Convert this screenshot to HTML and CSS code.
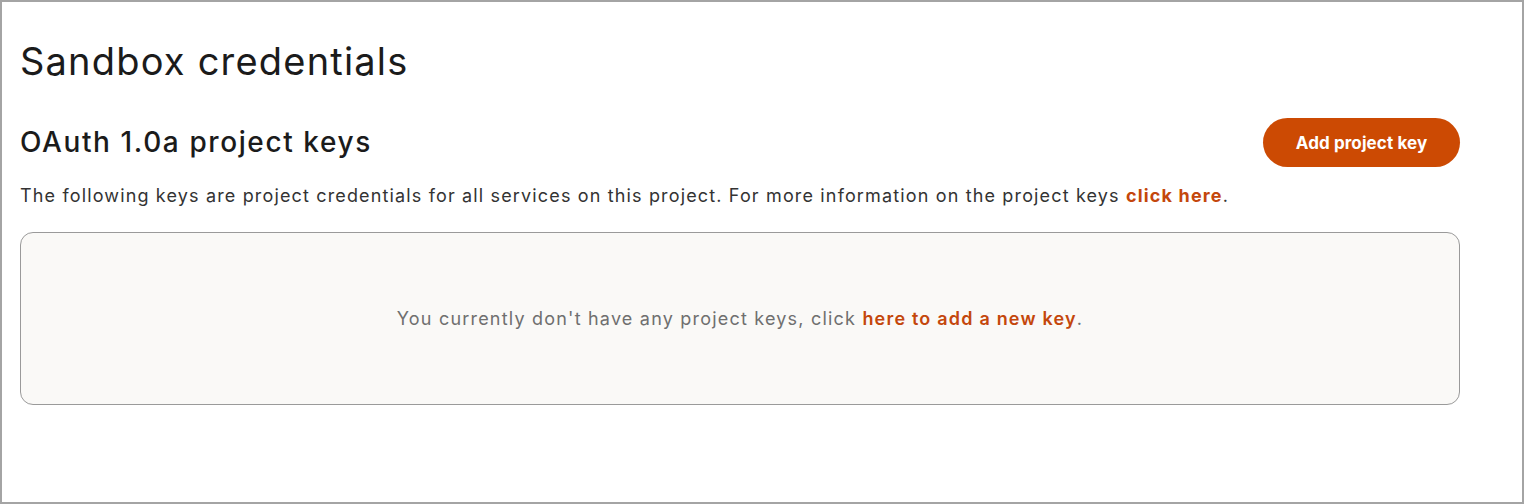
FILE: index.html
```html
<!DOCTYPE html>
<html lang="en">
<head>
<meta charset="utf-8">
<title>Sandbox credentials</title>
<link rel="stylesheet" href="styles.css">
</head>
<body>
<div class="frame">
  <main class="content">
    <h1 class="page-title">Sandbox credentials</h1>
    <div class="section-head">
      <h2 class="section-title">OAuth 1.0a project keys</h2>
      <button class="btn-primary" type="button">Add project key</button>
    </div>
    <p class="intro">The following keys are project credentials for all services on this project. For more information on the project keys <a class="link strong" href="#">click here</a>.</p>
    <div class="empty-box">
      <p class="empty-text">You currently don't have any project keys, click <a class="link" href="#">here to add a new key</a>.</p>
    </div>
  </main>
</div>
</body>
</html>
```
FILE: styles.css
```css
* { box-sizing: border-box; }
html, body { margin: 0; padding: 0; background: #fff; }
body { font-family: Inter, "Noto Sans", sans-serif; color: #1d1d1d; }
.frame {
  width: 1524px;
  height: 504px;
  border: 2px solid #a4a4a4;
  background: #fff;
  padding: 36px 62px 0 18px;
}
.content { width: 1440px; }
.page-title {
  margin: 0;
  font-size: 38px;
  font-weight: 400;
  line-height: 46px;
  color: #1b1b1b;
  letter-spacing: 1.2px;
}
.section-head {
  display: flex;
  align-items: center;
  justify-content: space-between;
  margin-top: 34px;
}
.section-title {
  margin: -2px 0 0;
  font-size: 28px;
  font-weight: 500;
  line-height: 34px;
  color: #1b1b1b;
  letter-spacing: 1.6px;
}
.btn-primary {
  width: 197px;
  height: 49px;
  border: none;
  border-radius: 25px;
  background: #cc4a03;
  color: #fff;
  font-family: inherit;
  font-size: 17px;
  font-weight: 700;
  letter-spacing: 0.1px;
  cursor: pointer;
}
.intro {
  margin: 15px 0 0;
  font-size: 18px;
  line-height: 28px;
  color: #333;
  letter-spacing: 1.15px;
}
.link { color: #c4470c; text-decoration: none; font-weight: 600; }
.link.strong { font-weight: 700; }
.empty-box {
  margin-top: 22px;
  height: 173px;
  border: 1px solid #9a9a9a;
  border-radius: 13px;
  background: #faf9f7;
  display: flex;
  align-items: center;
  justify-content: center;
}
.empty-text {
  margin: 0;
  font-size: 18px;
  line-height: 28px;
  color: #6f6f6f;
  letter-spacing: 1.2px;
}
```
